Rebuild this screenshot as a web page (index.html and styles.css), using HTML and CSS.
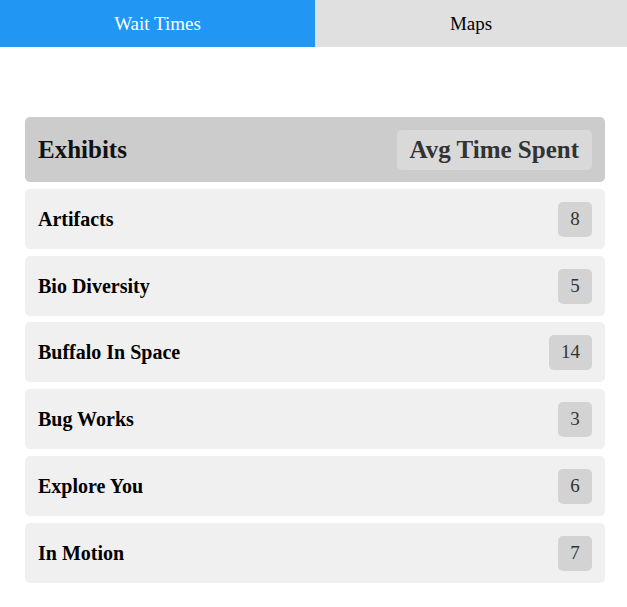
FILE: index.html
```html
<!DOCTYPE html>
<html lang="en">
<head>
<meta charset="UTF-8">
<title>Wait Times</title>
<link rel="stylesheet" href="styles.css">
</head>
<body>
    <div class="tabs">
        <button class="tab active">Wait Times</button>
        <button class="tab">Maps</button>
    </div>

    <div class="content">
        <div class="list-header">
            <span>Exhibits</span>
            <span class="header-badge">Avg Time Spent</span>
        </div>
        <div class="item"><span>Artifacts</span><span class="badge">8</span></div>
        <div class="item"><span>Bio Diversity</span><span class="badge">5</span></div>
        <div class="item"><span>Buffalo In Space</span><span class="badge">14</span></div>
        <div class="item"><span>Bug Works</span><span class="badge">3</span></div>
        <div class="item"><span>Explore You</span><span class="badge">6</span></div>
        <div class="item"><span>In Motion</span><span class="badge">7</span></div>
    </div>
</body>
</html>
```

FILE: styles.css
```css
body {
    margin: 0;
    font-family: 'Liberation Serif', 'Times New Roman', serif;
    background-color: #fff;
}
.tabs {
    display: grid;
    grid-template-columns: 315px 1fr;
}
.tab {
    height: 47px;
    border: none;
    background-color: #e0e0e0;
    color: #000;
    font-family: inherit;
    font-size: 19px;
    cursor: pointer;
}
.tab.active {
    background-color: #2196f3;
    color: #fff;
}
.content {
    width: 580px;
    margin: 70px 0 0 25px;
    display: flex;
    flex-direction: column;
    gap: 6.8px;
}
.list-header {
    display: flex;
    justify-content: space-between;
    align-items: center;
    height: 65px;
    box-sizing: border-box;
    padding: 0 13px;
    background-color: #cccccc;
    border-radius: 5px;
    font-size: 25px;
    font-weight: bold;
    color: #111;
}
.header-badge {
    background-color: #d9d9d9;
    color: #333;
    border-radius: 5px;
    padding: 6px 13px 6px;
    font-size: 25px;
}
.item {
    display: flex;
    justify-content: space-between;
    align-items: center;
    height: 60px;
    box-sizing: border-box;
    padding: 1px 13px 0;
    background-color: #f0f0f0;
    border-radius: 5px;
    font-size: 20px;
    font-weight: bold;
}
.badge {
    background-color: #d3d3d3;
    color: #333;
    font-weight: normal;
    font-size: 19px;
    border-radius: 5px;
    min-width: 10px;
    text-align: center;
    padding: 6px 12px 7px;
}
```
